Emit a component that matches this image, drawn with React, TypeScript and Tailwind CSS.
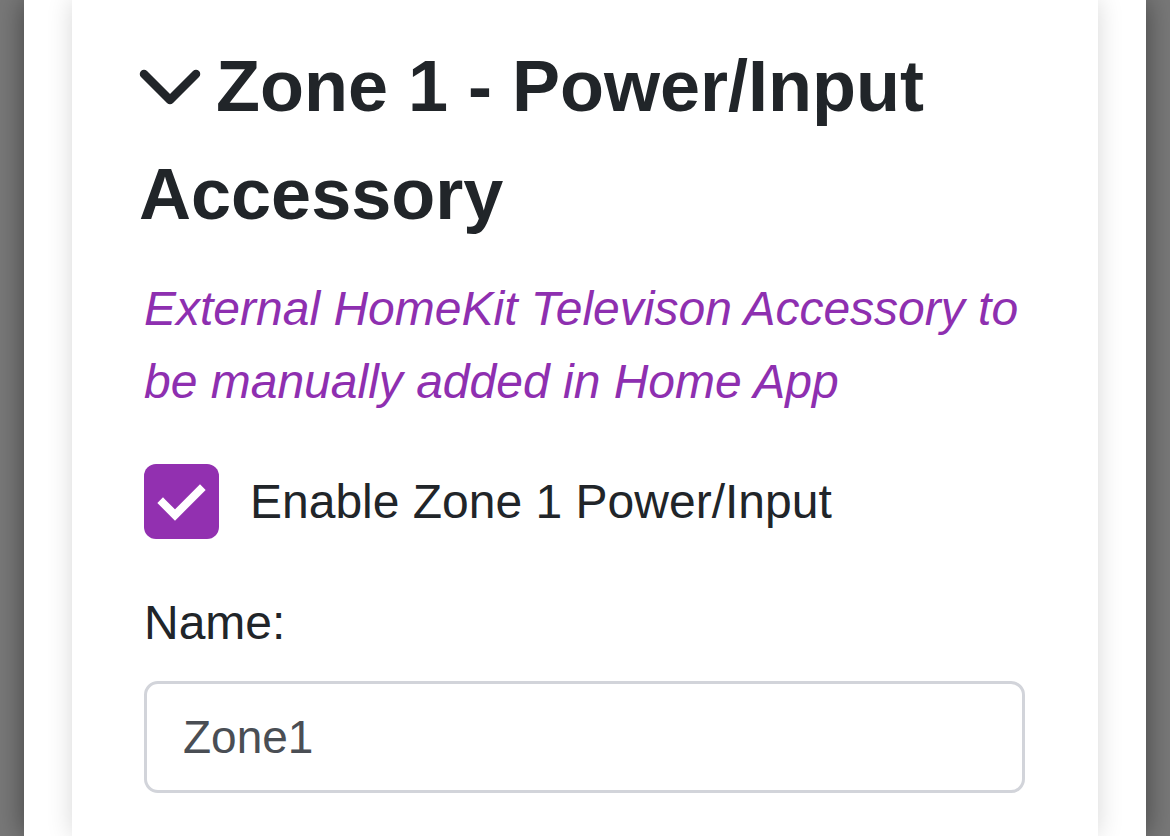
import React from "react";

export default function App() {
  return (
    <div className="flex h-[836px] w-[1170px] overflow-hidden bg-[#787878] px-[24px]" style={{ fontFamily: '"Liberation Sans", Arial, sans-serif' }}>
      <div className="relative flex w-full bg-white px-[48px] shadow-[0_0_26px_rgba(0,0,0,0.45)]">
        <div className="w-full bg-white pl-[72px] pr-[72px] pt-[32px] shadow-[0_0_24px_rgba(0,0,0,0.16)]">
          <h2 className="m-0 ml-[-5px] text-[72px] font-bold leading-[108px] text-[#212529]">
            <span className="mr-[14px] inline-block align-baseline">
              <svg width="64" height="40" viewBox="0 0 64 40" className="ml-[-1px] inline-block" style={{ verticalAlign: "3px" }}>
                <polyline points="6,6 32,32 58,6" fill="none" stroke="#212529" strokeWidth="8.5" strokeLinecap="round" strokeLinejoin="round" />
              </svg>
            </span>
            Zone 1 - Power/Input Accessory
          </h2>
          <p className="mt-[24px] text-[48px] italic leading-[73px] text-[#8e2fb0]">
            External HomeKit Televison Accessory to be manually added in Home App
          </p>
          <label className="mt-[46px] flex items-center gap-[31px]">
            <span className="flex h-[75px] w-[75px] items-center justify-center rounded-[12px] bg-[#9230b0]">
              <svg width="50" height="40" viewBox="0 0 50 40">
                <polyline points="6,21 18,33 43,8" fill="none" stroke="white" strokeWidth="8" strokeLinecap="square" />
              </svg>
            </span>
            <span className="text-[48px] text-[#212529]">Enable Zone 1 Power/Input</span>
          </label>
          <div className="mt-[48px] text-[48px] leading-[72px] text-[#212529]">Name:</div>
          <div className="mt-[22px] flex h-[112px] w-[881px] items-center rounded-[14px] border-[3px] border-[#d2d4da] px-[36px] text-[46px] text-[#4a4e54]">
            Zone1
          </div>
        </div>
      </div>
    </div>
  );
}
